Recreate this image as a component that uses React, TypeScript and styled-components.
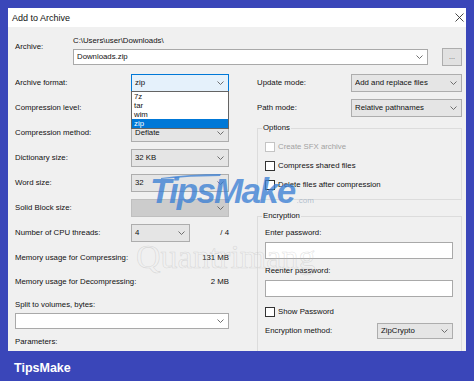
import React from 'react';
import styled, { createGlobalStyle, css } from 'styled-components';

const GlobalStyle = createGlobalStyle`
  html, body { margin: 0; padding: 0; }
  body {
    width: 474px;
    height: 381px;
    overflow: hidden;
    background: #3a46b9;
    font-family: "Liberation Sans", Arial, sans-serif;
  }
`;

const Page = styled.div`
  width: 474px;
  height: 381px;
  box-sizing: border-box;
  padding: 8px 8px 0 8px;
  display: flex;
  flex-direction: column;
`;

const Window = styled.div`
  position: relative;
  width: 458px;
  height: 343px;
  flex: none;
  background: #f0f0f0;
  display: flex;
  flex-direction: column;
  overflow: hidden;
`;

const TitleBar = styled.div`
  height: 19px;
  flex: none;
  background: #fff;
  display: flex;
  align-items: center;
  justify-content: space-between;
  padding: 0 2px 0 4px;
  font-size: 9px;
  color: #111;
`;

const Body = styled.div`
  flex: 1;
  padding: 9px 4px 0 7px;
  font-size: 7.8px;
  color: #111;
  display: flex;
  flex-direction: column;
  gap: 8px;
`;

const ArchiveGrid = styled.div`
  display: grid;
  grid-template-columns: 44px 1fr 20px;
  grid-template-rows: 10px 19px;
  column-gap: 14px;
  row-gap: 1px;
  align-items: center;
`;

const Main = styled.div`
  display: grid;
  grid-template-columns: 214px 205px;
  column-gap: 28px;
  align-items: start;
`;

const Column = styled.div`
  display: flex;
  flex-direction: column;
`;

const Row = styled.div<{ $h?: number; $mt?: number }>`
  display: flex;
  align-items: center;
  height: ${(p) => p.$h ?? 18}px;
  margin-top: ${(p) => p.$mt ?? 0}px;
`;

const Label = styled.span<{ $w?: number; $muted?: boolean; $row?: string; $top?: number }>`
  flex: none;
  width: ${(p) => (p.$w ? `${p.$w}px` : 'auto')};
  white-space: nowrap;
  line-height: 10px;
  color: ${(p) => (p.$muted ? '#a2a2a2' : '#111')};
  ${(p) => p.$row && `grid-row: ${p.$row}; align-self: start;`}
  margin-top: ${(p) => p.$top ?? 0}px;
`;

const Value = styled.span`
  margin-left: auto;
  white-space: nowrap;
  line-height: 10px;
`;

type ComboKind = 'read' | 'edit' | 'focus' | 'off';

const comboSkin: Record<ComboKind, ReturnType<typeof css>> = {
  read: css`
    background: #e5e5e5;
    border-color: #adadad;
  `,
  edit: css`
    background: #fff;
    border-color: #a9a9a9;
  `,
  focus: css`
    background: #e5f1fb;
    border-color: #0078d7;
  `,
  off: css`
    background: #cccccc;
    border-color: #bfbfbf;
  `,
};

const ComboBox = styled.div<{ $kind: ComboKind; $w?: number; $h?: number }>`
  position: relative;
  box-sizing: border-box;
  flex: none;
  width: ${(p) => (p.$w ? `${p.$w}px` : '100%')};
  height: ${(p) => p.$h ?? 18}px;
  border: 1px solid;
  ${(p) => comboSkin[p.$kind]}
  display: flex;
  align-items: center;
  padding: 0 4px 0 3px;
  font-size: 7.8px;
  color: #111;
`;

const ComboText = styled.span`
  flex: 1;
  white-space: nowrap;
  line-height: 10px;
`;

const ListBox = styled.ul`
  position: absolute;
  left: -1px;
  right: -1px;
  top: 100%;
  margin: 0;
  padding: 0;
  list-style: none;
  background: #fff;
  border: 1px solid #646464;
  z-index: 3;
`;

const ListItem = styled.li<{ $active?: boolean }>`
  height: 9px;
  line-height: 9px;
  padding-left: 2px;
  background: ${(p) => (p.$active ? '#0078d7' : 'transparent')};
  color: ${(p) => (p.$active ? '#fff' : '#111')};
`;

const TextBox = styled.div<{ $mt?: number }>`
  box-sizing: border-box;
  height: 17px;
  margin-top: ${(p) => p.$mt ?? 0}px;
  background: #fff;
  border: 1px solid #a9a9a9;
`;

const DotsButton = styled.div`
  box-sizing: border-box;
  height: 18px;
  background: #e1e1e1;
  border: 1px solid #adadad;
  color: #555;
  font-size: 7px;
  display: flex;
  align-items: center;
  justify-content: center;
`;

const Check = styled.span<{ $off?: boolean }>`
  flex: none;
  box-sizing: border-box;
  width: 10px;
  height: 10px;
  margin-right: 3px;
  background: #fff;
  border: 1px solid ${(p) => (p.$off ? '#c4c4c4' : '#333')};
`;

const Group = styled.fieldset<{ $mt: number; $pb: number }>`
  margin: ${(p) => p.$mt}px 0 0 0;
  min-width: 0;
  border: 1px solid #dcdcdc;
  padding: 0 8px ${(p) => p.$pb}px 7px;
  display: flex;
  flex-direction: column;
`;

const Legend = styled.legend`
  padding: 0 1px;
  margin-left: -3px;
  line-height: 10px;
  font-size: 7.8px;
  color: #111;
`;

const Footer = styled.div`
  flex: 1;
  display: flex;
  align-items: center;
  padding: 4px 0 0 6px;
  color: #fff;
  font-weight: bold;
  font-size: 12.5px;
`;

const BrandMark = styled.div`
  position: absolute;
  left: 142px;
  top: 165px;
  font-size: 35px;
  line-height: 1;
  font-weight: bold;
  font-style: italic;
  letter-spacing: -1.8px;
  color: rgba(60, 128, 212, 0.78);
  pointer-events: none;
  z-index: 2;
`;

const BrandSwoosh = styled.svg`
  position: absolute;
  left: 10px;
  top: 0;
`;

const BrandSuffix = styled.span`
  font-size: 8px;
  letter-spacing: 0;
  font-style: normal;
  font-weight: normal;
  color: rgba(150, 170, 190, 0.7);
  margin-left: 2px;
`;

const SiteMark = styled.div`
  position: absolute;
  left: 128px;
  top: 232px;
  font-family: "Liberation Serif", serif;
  font-size: 34px;
  line-height: 1;
  color: transparent;
  -webkit-text-stroke: 0.6px rgba(185, 185, 185, 0.45);
  pointer-events: none;
  z-index: 2;
`;

const Chevron = () => (
  <svg width="7" height="4" viewBox="0 0 7 4">
    <path d="M0.5 0.5 L3.5 3.5 L6.5 0.5" fill="none" stroke="#606060" strokeWidth="0.9" />
  </svg>
);

const CloseIcon = () => (
  <svg width="9" height="9" viewBox="0 0 9 9">
    <path d="M0.5 0.5 L8.5 8.5 M8.5 0.5 L0.5 8.5" stroke="#333" strokeWidth="0.9" />
  </svg>
);

function Combo({
  kind,
  value,
  w,
  h,
  children,
}: {
  kind: ComboKind;
  value?: string;
  w?: number;
  h?: number;
  children?: React.ReactNode;
}) {
  return (
    <ComboBox $kind={kind} $w={w} $h={h}>
      <ComboText>{value}</ComboText>
      <Chevron />
      {children}
    </ComboBox>
  );
}

function CheckRow({ label, off, mt }: { label: string; off?: boolean; mt?: number }) {
  return (
    <Row $h={12} $mt={mt}>
      <Check $off={off} />
      <Label $muted={off}>{label}</Label>
    </Row>
  );
}

const formats = ['7z', 'tar', 'wim', 'zip'];

export default function App() {
  return (
    <>
      <GlobalStyle />
      <Page>
        <Window>
          <TitleBar>
            <span>Add to Archive</span>
            <CloseIcon />
          </TitleBar>
          <Body>
            <ArchiveGrid>
              <Label $row="1 / 3" $top={6}>
                Archive:
              </Label>
              <Label>C:\Users\user\Downloads\</Label>
              <span />
              <Combo kind="edit" value="Downloads.zip" h={16} />
              <DotsButton>...</DotsButton>
            </ArchiveGrid>

            <Main>
              <Column>
                <Row>
                  <Label $w={116}>Archive format:</Label>
                  <Combo kind="focus" value="zip" w={98}>
                    <ListBox>
                      {formats.map((f) => (
                        <ListItem key={f} $active={f === 'zip'}>
                          {f}
                        </ListItem>
                      ))}
                    </ListBox>
                  </Combo>
                </Row>
                <Row $mt={7}>
                  <Label $w={116}>Compression level:</Label>
                  <Combo kind="read" w={98} />
                </Row>
                <Row $mt={7}>
                  <Label $w={116}>Compression method:</Label>
                  <Combo kind="read" value="Deflate" w={98} />
                </Row>
                <Row $mt={7}>
                  <Label $w={116}>Dictionary size:</Label>
                  <Combo kind="read" value="32 KB" w={98} />
                </Row>
                <Row $mt={7}>
                  <Label $w={116}>Word size:</Label>
                  <Combo kind="read" value="32" w={98} />
                </Row>
                <Row $mt={7}>
                  <Label $w={116}>Solid Block size:</Label>
                  <Combo kind="off" w={98} />
                </Row>
                <Row $mt={7}>
                  <Label $w={116}>Number of CPU threads:</Label>
                  <Combo kind="read" value="4" w={59} />
                  <Value>/ 4</Value>
                </Row>
                <Row $mt={7}>
                  <Label>Memory usage for Compressing:</Label>
                  <Value>131 MB</Value>
                </Row>
                <Row $h={16} $mt={7}>
                  <Label>Memory usage for Decompressing:</Label>
                  <Value>2 MB</Value>
                </Row>
                <Row $h={16} $mt={7}>
                  <Label>Split to volumes, bytes:</Label>
                </Row>
                <Combo kind="edit" h={16} />
                <Row $h={12} $mt={7}>
                  <Label>Parameters:</Label>
                </Row>
              </Column>

              <Column>
                <Row>
                  <Label $w={94}>Update mode:</Label>
                  <Combo kind="read" value="Add and replace files" w={111} />
                </Row>
                <Row $mt={7}>
                  <Label $w={94}>Path mode:</Label>
                  <Combo kind="read" value="Relative pathnames" w={111} />
                </Row>

                <Group $mt={6} $pb={8}>
                  <Legend>Options</Legend>
                  <CheckRow label="Create SFX archive" off mt={8} />
                  <CheckRow label="Compress shared files" mt={7} />
                  <CheckRow label="Delete files after compression" mt={7} />
                </Group>

                <Group $mt={11} $pb={20}>
                  <Legend>Encryption</Legend>
                  <Row $h={12} $mt={6}>
                    <Label>Enter password:</Label>
                  </Row>
                  <TextBox $mt={3} />
                  <Row $h={12} $mt={6}>
                    <Label>Reenter password:</Label>
                  </Row>
                  <TextBox $mt={3} />
                  <CheckRow label="Show Password" mt={9} />
                  <Row $h={16} $mt={5}>
                    <Label $w={112}>Encryption method:</Label>
                    <Combo kind="read" value="ZipCrypto" w={76} h={16} />
                  </Row>
                </Group>
              </Column>
            </Main>
          </Body>

          <BrandMark>
            <BrandSwoosh width="62" height="6" viewBox="0 0 62 6">
              <path d="M1 5 Q30 1 61 1 L60 3 Q30 3 1 6 Z" fill="rgba(60, 128, 212, 0.78)" />
            </BrandSwoosh>
            TipsMake<BrandSuffix>.com</BrandSuffix>
          </BrandMark>
          <SiteMark>Quantrimang</SiteMark>
        </Window>
        <Footer>TipsMake</Footer>
      </Page>
    </>
  );
}
